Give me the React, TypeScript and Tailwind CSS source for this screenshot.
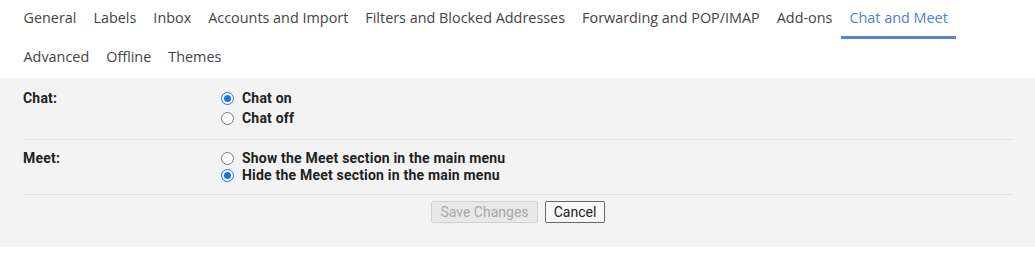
import React from 'react'

const tabs = [
  'General',
  'Labels',
  'Inbox',
  'Accounts and Import',
  'Filters and Blocked Addresses',
  'Forwarding and POP/IMAP',
  'Add-ons',
  'Chat and Meet',
  'Advanced',
  'Offline',
  'Themes',
]

const Radio = ({ checked }: { checked: boolean }) => (
  <span
    className={
      'inline-flex w-[13px] h-[13px] rounded-full border items-center justify-center shrink-0 bg-white ' +
      (checked ? 'border-[#1a73e8]' : 'border-[#767676]')
    }
  >
    {checked && <span className="w-[7px] h-[7px] rounded-full bg-[#1a73e8]" />}
  </span>
)

const Option = ({ label, checked }: { label: string; checked?: boolean }) => (
  <label className="flex items-center gap-[8px] h-[17px]">
    <Radio checked={!!checked} />
    <span className="font-bold text-[14px] tracking-[0.2px] text-[#222]">{label}</span>
  </label>
)

export default function App() {
  return (
    <div className="w-[1035px] h-[258px] bg-white font-['Roboto',sans-serif]">
      {/* Tabs */}
      <div className="flex flex-wrap w-[990px] px-[15px] font-['Open_Sans',sans-serif] text-[14.4px] text-[#444]">
        {tabs.map((t) => {
          const active = t === 'Chat and Meet'
          return (
            <div
              key={t}
              className={
                'h-[39px] px-[8.5px] flex items-center border-b-[3px] ' +
                (active ? 'border-[#5385d1] text-[#4d7fd3]' : 'border-transparent')
              }
            >
              {t}
            </div>
          )
        })}
      </div>

      {/* Settings panel */}
      <div className="bg-[#f3f3f3] h-[169px] pl-[23px] pr-[22px] pt-[12px] text-[14px]">
        <div className="flex border-b border-[#e2e2e2] pb-[12px]">
          <div className="w-[198px] font-bold text-[#222] tracking-[0.2px] leading-[17px]">Chat:</div>
          <div className="flex flex-col gap-[3px]">
            <Option label="Chat on" checked />
            <Option label="Chat off" />
          </div>
        </div>
        <div className="flex border-b border-[#e2e2e2] pt-[10px] pb-[10px]">
          <div className="w-[198px] font-bold text-[#222] tracking-[0.2px] leading-[17px]">Meet:</div>
          <div className="flex flex-col">
            <Option label="Show the Meet section in the main menu" />
            <Option label="Hide the Meet section in the main menu" checked />
          </div>
        </div>
        <div className="flex justify-center gap-[7px] pt-[6px]">
          <button className="h-[22px] w-[107px] border border-[#d0d0d0] rounded-[2px] bg-[#e8e8e8] text-[#a9a9a9] text-[14px]">
            Save Changes
          </button>
          <button className="h-[22px] w-[60px] border border-[#666] rounded-[2px] bg-[#f7f7f7] text-[#222] text-[14px]">
            Cancel
          </button>
        </div>
      </div>
    </div>
  )
}
